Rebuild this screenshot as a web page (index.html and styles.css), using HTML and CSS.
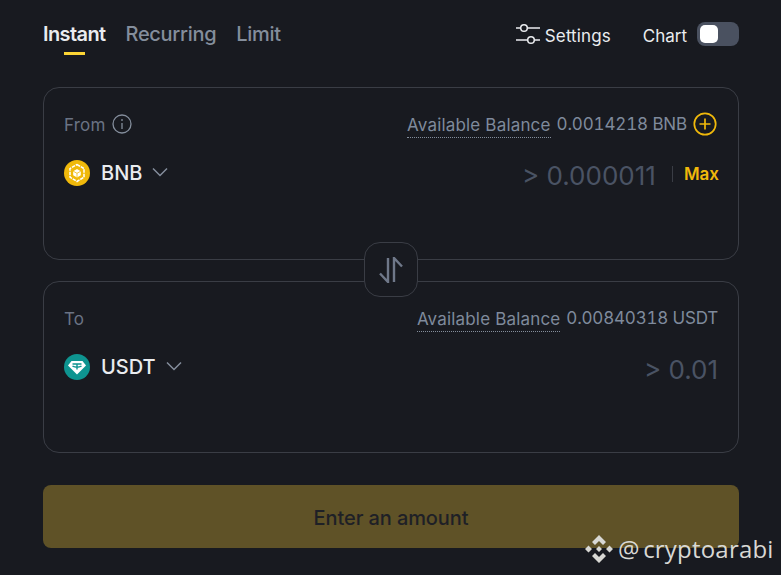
FILE: index.html
```html
<!DOCTYPE html>
<html lang="en">

<head>
    <meta charset="UTF-8">
    <title>Convert</title>
    <link rel="stylesheet" href="styles.css">
</head>

<body>
    <div class="parent">
        <div class="topbar">
            <div class="tabs">
                <div class="tab active">Instant</div>
                <div class="tab">Recurring</div>
                <div class="tab">Limit</div>
            </div>
            <div class="top-actions">
                <div class="settings">
                    <svg width="24" height="22" viewBox="0 0 24 22" fill="none" stroke="#eaecef" stroke-width="1.5">
                        <path d="M0 5H4.500M11.500 5H24M0 17H11.500M18.500 17H24" />
                        <circle cx="8" cy="5" r="3.300" />
                        <circle cx="15" cy="17" r="3.300" />
                    </svg>
                    <span class="action-text">Settings</span>
                </div>
                <div class="chart">
                    <span class="action-text">Chart</span>
                    <div class="toggle">
                        <div class="knob"></div>
                    </div>
                </div>
            </div>
        </div>

        <div class="swap-area">
            <div class="card">
                <div class="row">
                    <div class="label">From
                        <svg class="info" width="20" height="20" viewBox="0 0 20 20" fill="none" stroke="#848e9c" stroke-width="1.300">
                            <circle cx="10" cy="10" r="9" />
                            <path d="M10 9V15M10 5V7" />
                        </svg>
                    </div>
                    <div class="balance">
                        <span class="dotted">Available Balance</span>
                        <span class="value">0.0014218 BNB</span>
                        <svg class="plus" width="24" height="24" viewBox="0 0 24 24" fill="none" stroke="#f0b90b" stroke-width="1.700">
                            <circle cx="12" cy="12" r="10.700" />
                            <path d="M12 6.500V17.500M6.500 12H17.500" />
                        </svg>
                    </div>
                </div>
                <div class="row coin-row">
                    <div class="coin">
                        <svg width="26" height="26" viewBox="0 0 26 26">
                            <circle cx="13" cy="13" r="13" fill="#f0b90b" />
                            <path d="M13 4.500L20 8.600V17.200L13 21.500L6 17.200V8.600Z" fill="none" stroke="#fff" stroke-width="1.500" stroke-dasharray="3.500 0.900" />
                            <path d="M13 9L16.800 11.200V15.200L13 17.400L9.200 15.200V11.200Z" fill="#fff" />
                            <path d="M9.200 11.200L13 13.300L16.800 11.200M13 13.300V17.400" fill="none" stroke="#f0b90b" stroke-width="0.800" />
                        </svg>
                        <span class="coin-name">BNB</span>
                        <svg class="chevron" width="18" height="10" viewBox="0 0 18 10" fill="none" stroke="#848e9c" stroke-width="1.500">
                            <path d="M2 1.500L9 8.500L16 1.500" />
                        </svg>
                    </div>
                    <div class="amount-box">
                        <span class="amount">&gt; 0.000011</span>
                        <span class="max">Max</span>
                    </div>
                </div>
            </div>

            <div class="card second">
                <div class="row">
                    <div class="label">To</div>
                    <div class="balance">
                        <span class="dotted">Available Balance</span>
                        <span class="value">0.00840318 USDT</span>
                    </div>
                </div>
                <div class="row coin-row">
                    <div class="coin">
                        <svg width="26" height="26" viewBox="0 0 26 26">
                            <circle cx="13" cy="13" r="13" fill="#0e9490" />
                            <path d="M7.500 7H18.500L22 11.500L13 20.500L4 11.500Z" fill="#fff" />
                            <path d="M8.500 10H17.500M13 10V15.500M8.500 12.200C11 13.400 15 13.400 17.500 12.200" fill="none" stroke="#0e9490" stroke-width="1.400" />
                        </svg>
                        <span class="coin-name">USDT</span>
                        <svg class="chevron" width="18" height="10" viewBox="0 0 18 10" fill="none" stroke="#848e9c" stroke-width="1.500">
                            <path d="M2 1.500L9 8.500L16 1.500" />
                        </svg>
                    </div>
                    <div class="amount-box">
                        <span class="amount">&gt; 0.01</span>
                    </div>
                </div>
            </div>

            <div class="swap-button">
                <svg width="26" height="26" viewBox="0 0 26 26" fill="none" stroke="#6f7889" stroke-width="2.400">
                    <path d="M10 1V25L2 16.500M16 25V1L24 9.500" />
                </svg>
            </div>
        </div>

        <div class="submit">Enter an amount</div>
    </div>

    <div class="watermark">
        <svg width="28" height="28" viewBox="0 0 28 28" fill="#d8d8d4">
            <path d="M14 0L21 7L18 10L14 6L10 10L7 7Z" />
            <path d="M14 28L21 21L18 18L14 22L10 18L7 21Z" />
            <path d="M3.500 10.500L7 14L3.500 17.500L0 14ZM24.500 10.500L28 14L24.500 17.500L21 14ZM14 11L17 14L14 17L11 14Z" />
        </svg>
        <span>@ cryptoarabi</span>
    </div>
</body>

</html>
```

FILE: styles.css
```css
body {
    padding: 0px;
    margin: 0px;
    background-color: #181a20;
    font-family: "Inter", "Liberation Sans", sans-serif;
    height: 575px;
    overflow: hidden;
    position: relative;
}

.parent {
    display: flex;
    flex-direction: column;
    padding: 0px 42px 0px 43px;
}

.topbar {
    display: flex;
    justify-content: space-between;
    height: 87px;
}

.tabs {
    display: flex;
    gap: 20px;
    padding-top: 21px;
}

.tab {
    font-size: 20px;
    line-height: 26px;
    font-weight: 500;
    color: #848e9c;
    height: 34px;
    letter-spacing: -0.3px;
}

.tab.active {
    color: #eaecef;
    font-weight: 600;
    letter-spacing: -0.6px;
    position: relative;
}

.tab.active::after {
    content: "";
    position: absolute;
    left: 21px;
    top: 31px;
    width: 21px;
    height: 3px;
    background-color: #fcd535;
}

.top-actions {
    display: flex;
    align-items: flex-start;
    gap: 32px;
    padding-top: 22px;
    color: #eaecef;
    font-size: 17px;
}

.settings,
.chart {
    display: flex;
    align-items: center;
    gap: 5px;
    height: 24px;
}

.settings {
    letter-spacing: 0.1px;
}

.chart {
    gap: 10px;
}

.action-text {
    padding-top: 3px;
}

.toggle {
    width: 42px;
    height: 24px;
    border-radius: 8px;
    background-color: #4a5160;
    display: flex;
    align-items: center;
    padding-left: 3px;
    box-sizing: border-box;
}

.knob {
    width: 18px;
    height: 18px;
    border-radius: 5px;
    background-color: white;
}

.swap-area {
    position: relative;
    display: flex;
    flex-direction: column;
    gap: 21px;
}

.card {
    height: 173px;
    box-sizing: border-box;
    border: 1px solid #3a3d45;
    border-radius: 16px;
    padding: 23px 20px 0px 20px;
}

.card.second {
    height: 172px;
}

.row {
    display: flex;
    justify-content: space-between;
    align-items: center;
    height: 26px;
}

.coin-row {
    margin-top: 16px;
    height: 40px;
}

.label {
    display: flex;
    align-items: center;
    gap: 6px;
    padding-top: 2px;
    font-size: 17px;
    letter-spacing: 0.2px;
    color: #6a7384;
}

.info {
    margin-top: -2px;
}

.balance {
    display: flex;
    align-items: center;
    gap: 6px;
    font-size: 17px;
    color: #7f8a9c;
}

.dotted {
    border-bottom: 1px dotted #848e9c;
    padding-bottom: 2px;
    margin-top: 4px;
    letter-spacing: 0.17px;
}

.value {
    letter-spacing: -0.15px;
    font-variant-numeric: tabular-nums;
}

.second .value {
    letter-spacing: -0.2px;
}

.plus {
    margin-right: 1px;
}

.coin {
    display: flex;
    align-items: center;
}

.coin-name {
    margin-left: 11px;
    font-size: 20px;
    font-weight: 500;
    color: #eaecef;
}

.chevron {
    margin-left: 9px;
    margin-top: -2px;
}

.amount-box {
    display: flex;
    align-items: center;
    margin-top: 5px;
}

.amount {
    font-size: 26px;
    color: #4a5364;
}

.max {
    margin-left: 16px;
    margin-right: -1px;
    margin-top: -4px;
    padding-left: 11px;
    border-left: 1px solid #3a3d45;
    font-size: 17px;
    line-height: 16px;
    font-weight: 600;
    color: #f0b90b;
}

.swap-button {
    position: absolute;
    left: 321px;
    top: 155px;
    width: 54px;
    height: 55px;
    box-sizing: border-box;
    border: 1px solid #3a3d45;
    border-radius: 16px;
    background-color: #181a20;
    display: flex;
    align-items: center;
    justify-content: center;
}

.submit {
    margin-top: 32px;
    height: 63px;
    box-sizing: border-box;
    padding-top: 3px;
    border-radius: 8px;
    background-color: #5f5227;
    color: #1e2026;
    font-size: 20px;
    font-weight: 500;
    letter-spacing: -0.1px;
    display: flex;
    align-items: center;
    justify-content: center;
}

.watermark {
    position: absolute;
    left: 585px;
    top: 534px;
    display: flex;
    align-items: center;
    gap: 5px;
    color: #d8d8d4;
    font-family: "Open Sans", sans-serif;
    font-size: 24px;
    line-height: 30px;
    letter-spacing: 0.2px;
    word-spacing: -3px;
}
```
